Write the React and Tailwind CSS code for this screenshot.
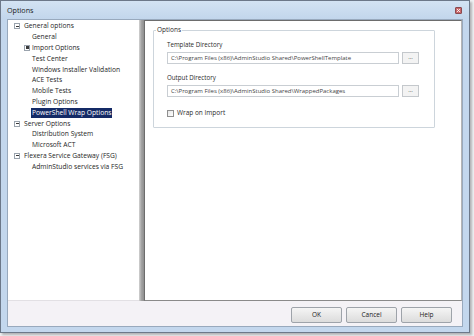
import { X } from "lucide-react";

const treeItems = [
  { label: "General options", level: 0, toggle: "minus" },
  { label: "General", level: 1 },
  { label: "Import Options", level: 1, toggle: "plus" },
  { label: "Test Center", level: 1 },
  { label: "Windows Installer Validation", level: 1 },
  { label: "ACE Tests", level: 1 },
  { label: "Mobile Tests", level: 1 },
  { label: "Plugin Options", level: 1 },
  { label: "PowerShell Wrap Options", level: 1, selected: true },
  { label: "Server Options", level: 0, toggle: "minus" },
  { label: "Distribution System", level: 1 },
  { label: "Microsoft ACT", level: 1 },
  { label: "Flexera Service Gateway (FSG)", level: 0, toggle: "minus" },
  { label: "AdminStudio services via FSG", level: 1 },
];

const Toggle = ({ type }) => (
  <span className="w-[6px] h-[6px] border border-[#9aa3ad] bg-white flex items-center justify-center">
    {type === "minus" ? (
      <span className="w-[3px] h-px bg-[#3a3a3a]" />
    ) : (
      <span className="w-[3px] h-[3px] bg-[#3a3a3a]" />
    )}
  </span>
);

const TreeRow = ({ item }) => {
  const indent = item.level === 0 ? "pl-[6px]" : "pl-[14px]";
  return (
    <div className={`h-[10.8px] flex items-center ${indent}`}>
      <div className={`${item.level === 0 ? "w-[9px]" : "w-[9px] pl-[2px]"} flex items-center`}>
        {item.toggle && <Toggle type={item.toggle} />}
      </div>
      <span
        className={`px-[1px] leading-[10px] whitespace-nowrap ${
          item.selected ? "bg-[#142a66] text-white" : "text-[#1e1e1e]"
        }`}
      >
        {item.label}
      </span>
    </div>
  );
};

const PathField = ({ label, value }) => (
  <div className="flex flex-col">
    <span className="text-[6.2px] text-[#2a2a2a] leading-[8px] mb-[3px]">{label}</span>
    <div className="flex items-center gap-[3px]">
      <div className="w-[232px] h-[12px] border border-[#c9ced3] bg-white flex items-center px-[3px] text-[6px] text-[#444] whitespace-nowrap overflow-hidden">
        {value}
      </div>
      <div className="w-[17px] h-[12px] border border-[#c4c8cc] bg-[#f3f3f3] flex items-center justify-center text-[6px] leading-none text-[#333] pb-[2px]">
        ...
      </div>
    </div>
  </div>
);

const DlgButton = ({ children }) => (
  <div className="w-[51px] h-[16px] rounded-[2px] border border-[#9ea3aa] bg-gradient-to-b from-[#f5f5f5] to-[#dcdcdc] flex items-center justify-center text-[6.5px] text-[#222]">
    {children}
  </div>
);

export default function App() {
  return (
    <div
      className="w-[474px] h-[336px] bg-[#eef0f2] overflow-hidden"
      style={{ fontFamily: '"Open Sans", "Noto Sans", sans-serif' }}
    >
      <div className="w-[470px] h-[333px] flex flex-col border border-[#6c7889] bg-[#c3d7ed] shadow-[2px_2px_2px_rgba(0,0,0,0.25)]">
        {/* title bar */}
        <div className="h-[18px] flex items-center justify-between pl-[6px] pr-[7px] bg-gradient-to-b from-[#d3e3f3] to-[#c2d6ec]">
          <span className="text-[7.2px] text-[#1b1b1b] leading-none pt-[1px]">Options</span>
          <div className="w-[7px] h-[7px] rounded-[1px] bg-[#c9686a] border border-[#8a4a50] flex items-center justify-center">
            <X size={5} strokeWidth={4} className="text-white" />
          </div>
        </div>

        {/* client area */}
        <div className="flex-1 flex flex-col mx-[6px] mb-[5px] bg-[#f4f2f6] border border-[#98a9bd]">
          <div className="h-[281px] flex">
            {/* tree */}
            <div className="w-[131px] bg-white pt-[1px] text-[6.7px] border-b border-[#e2e0e4]">
              {treeItems.map((item) => (
                <TreeRow key={item.label} item={item} />
              ))}
            </div>
            {/* splitter */}
            <div className="w-[5px] bg-gradient-to-r from-[#d2d2d2] via-[#a3a3a3] to-[#8e8e8e]" />
            {/* right panel */}
            <div className="flex-1 bg-white border-t border-l border-[#6d6d6d] border-r border-r-[#b5b5b5] border-b border-b-[#8a8a8a] pl-[8px] pt-[9px] pr-[26px]">
              <div className="relative border border-[#cdd5dc] rounded-[1px] h-[98px] pl-[13px] pt-[10px] flex flex-col gap-[10px]">
                <span className="absolute -top-[5px] left-[2px] bg-white px-[1px] text-[6.5px] leading-[8px] text-[#2a2a2a]">
                  Options
                </span>
                <PathField
                  label="Template Directory"
                  value="C:\Program Files (x86)\AdminStudio Shared\PowerShellTemplate"
                />
                <PathField
                  label="Output Directory"
                  value="C:\Program Files (x86)\AdminStudio Shared\WrappedPackages"
                />
                <div className="flex items-center gap-[3px] mt-[3px]">
                  <span className="w-[7px] h-[7px] border border-[#8f8f8f] bg-gradient-to-br from-[#e6e6e6] to-white" />
                  <span className="text-[6.5px] text-[#2a2a2a] leading-none">Wrap on Import</span>
                </div>
              </div>
            </div>
          </div>

          {/* buttons */}
          <div className="flex-1 flex items-center justify-end gap-[4px] pr-[10px] pt-[2px]">
            <DlgButton>OK</DlgButton>
            <DlgButton>Cancel</DlgButton>
            <DlgButton>Help</DlgButton>
          </div>
        </div>
      </div>
    </div>
  );
}
